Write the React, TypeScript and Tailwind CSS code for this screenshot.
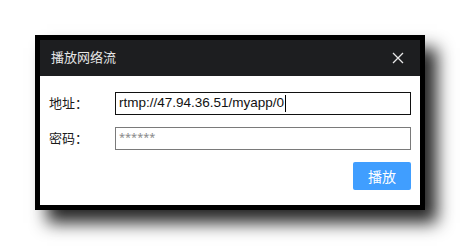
import React from "react";

export default function App() {
  return (
    <div className="w-[460px] h-[246px] bg-white pt-[35px] pl-[35px]" style={{ fontFamily: '"Noto Sans", "Noto Sans CJK SC", sans-serif' }}>
      <div className="w-[390px] h-[175px] border-[5px] border-black bg-white flex flex-col shadow-[12px_13px_16px_rgba(0,0,0,0.85)]">
        <div className="h-[36px] bg-[#1d1e20] flex items-center justify-between pl-[11px] pr-[12px]">
          <span className="text-[13px] text-[#e6e6e6]">播放网络流</span>
          <svg width="12" height="12" viewBox="0 0 12 12" className="mr-[4px]">
            <path d="M1 1L11 11M11 1L1 11" stroke="#e8e8e8" strokeWidth="1.3" />
          </svg>
        </div>
        <div className="flex-1 flex flex-col pl-[9px] pr-[9px] pt-[16px]">
          <div className="flex items-center h-[23px]">
            <span className="w-[66px] text-[13px] text-[#1a1a1a]">地址：</span>
            <div className="flex-1 h-[23px] border border-[#111] flex items-center pl-[3px] text-[13.5px] text-[#111]" style={{ fontFamily: '"Liberation Sans", "Noto Sans CJK SC", sans-serif' }}>
              rtmp://47.94.36.51/myapp/0<span className="inline-block w-px h-[17px] bg-black ml-[1px]"></span>
            </div>
          </div>
          <div className="flex items-center h-[23px] mt-[12px]">
            <span className="w-[66px] text-[13px] text-[#1a1a1a]">密码：</span>
            <div className="flex-1 h-[23px] border border-[#7a7a7a] flex items-start pt-[3px] pl-[3px] text-[11px] text-[#8a8a8a] leading-none">
              ******
            </div>
          </div>
          <div className="flex justify-end mt-[12px]">
            <button className="w-[58px] h-[28px] bg-[#409eff] rounded-[2px] text-white text-[14px] flex items-center justify-center">播放</button>
          </div>
        </div>
      </div>
    </div>
  );
}
